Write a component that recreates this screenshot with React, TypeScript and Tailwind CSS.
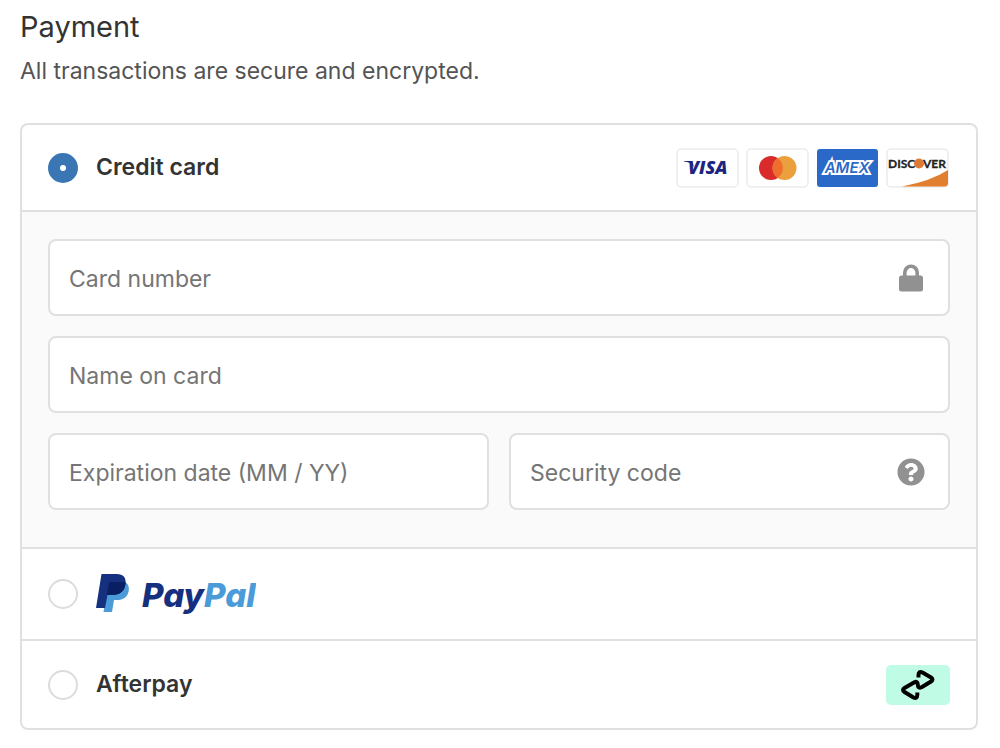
"use client";

import React, { useState } from 'react';
import { FaQuestionCircle } from 'react-icons/fa';

const radioClass =
  "appearance-none shrink-0 size-[30px] rounded-full bg-white border-2 border-[#dcdcdc] checked:border-[12px] checked:border-[#3a76b4] cursor-pointer";

const fieldClass =
  "flex items-center h-[77px] bg-white border-2 border-[#e0e0e0] rounded-lg pl-[19px] pr-[23px]";

const inputClass =
  "flex-1 min-w-0 h-full pt-0.5 bg-transparent text-[23px] text-[#333333] placeholder:text-[#757575] outline-none";

function VisaIcon() {
  return (
    <svg viewBox="0 0 63 40" className="w-[63px] h-10" role="img" aria-label="Visa">
      <rect x="1" y="1" width="61" height="38" rx="4" fill="#fff" stroke="#ebebeb" strokeWidth="1.5" />
      <path d="M8 13h8l2 6-3-3.200q-2.500-1.900-7-2.200z" fill="#1c2580" />
      <text x="12" y="26" fontFamily="Open Sans, sans-serif" fontSize="18" fontWeight="800" fontStyle="italic" fill="#1c2580">VISA</text>
    </svg>
  );
}

function MastercardIcon() {
  return (
    <svg viewBox="0 0 63 40" className="w-[63px] h-10" role="img" aria-label="Mastercard">
      <rect x="1" y="1" width="61" height="38" rx="4" fill="#fff" stroke="#ebebeb" strokeWidth="1.5" />
      <circle cx="25" cy="20" r="12" fill="#d92b2b" />
      <circle cx="38.500" cy="20" r="12" fill="#eba03d" />
      <path d="M31.750 10.100a12 12 0 0 1 0 19.800a12 12 0 0 1 0-19.800z" fill="#ee6f2d" />
    </svg>
  );
}

function AmexIcon() {
  return (
    <svg viewBox="0 0 63 40" className="w-[63px] h-10" role="img" aria-label="American Express">
      <rect x="1" y="1" width="61" height="38" rx="3" fill="#2a69c8" />
      <text
        x="31"
        y="25"
        textAnchor="middle"
        fontFamily="Inter, sans-serif"
        fontSize="15"
        fontWeight="600"
        fontStyle="italic"
        fill="#2a69c8"
        stroke="#fff"
        strokeWidth="4"
        paintOrder="stroke"
      >
        AMEX
      </text>
    </svg>
  );
}

function DiscoverIcon() {
  return (
    <svg viewBox="0 0 63 40" className="w-[63px] h-10" role="img" aria-label="Discover">
      <rect x="1" y="1" width="61" height="38" rx="4" fill="#fff" stroke="#ebebeb" strokeWidth="1.5" />
      <path d="M62 22v13q0 3.500-3.500 3.500H16Q45 33 62 22z" fill="#e27f2f" />
      <g fontFamily="Lato, sans-serif" fontSize="12" fontWeight="700" fill="#222" stroke="#222" strokeWidth="0.3">
        <text x="2" y="20">DISC</text>
        <text x="37" y="20">VER</text>
      </g>
      <circle cx="33" cy="15.500" r="5" fill="#df7a36" />
    </svg>
  );
}

function PaypalLogo() {
  return (
    <svg viewBox="0 0 160 44" className="w-40 h-11" role="img" aria-label="PayPal">
      <path d="M13 10h15c4 1 5.500 4.500 4.700 9c-1.200 6.500-6 9-11.500 9H18l-2 12H7.500z" fill="#4a9bd8" />
      <path d="M5.500 2H21c6 0 9.500 3.500 8.500 10c-1 7.500-6 11-13 11h-5L9 36H0z" fill="#15307e" />
      <path d="M13 10h16.500v2c-1 7.500-6 11-13 11h-5.700z" fill="#0a1f63" />
      <text x="46" y="35" fontFamily="Inter, sans-serif" fontSize="33" fontWeight="800" fontStyle="italic" fill="#15307e">
        Pay<tspan fill="#4a9bd8">Pal</tspan>
      </text>
    </svg>
  );
}

function AfterpayIcon() {
  return (
    <svg viewBox="0 0 64 40" className="w-16 h-10" role="img" aria-label="Afterpay">
      <rect width="64" height="40" rx="5" fill="#bffbe5" />
      <path
        d="M32.500 12.500V10Q32.500 5.500 36.500 7.500L45 12.500Q48 14.500 45 16.500L36 22Q32 24 31.800 20V19.500Q31.500 15.500 28 17.500L18.500 23Q15.500 25 18.500 27L27.500 32.500Q31.200 34 31.300 30V27.500"
        fill="none"
        stroke="#000"
        strokeWidth="4"
        strokeLinejoin="round"
      />
    </svg>
  );
}

function LockIcon() {
  return (
    <svg viewBox="0 0 28 28" className="size-7 shrink-0" aria-hidden="true">
      <rect x="2" y="11.500" width="24" height="16" rx="2.500" fill="#919191" />
      <path d="M7.800 13V8.500a6.200 6.200 0 0 1 12.400 0V13" fill="none" stroke="#919191" strokeWidth="3.600" />
    </svg>
  );
}

export default function App() {
  const [method, setMethod] = useState('card');

  const handleMethod = (e: React.ChangeEvent<HTMLInputElement>) => {
    setMethod(e.target.value);
  };

  return (
    <main className="min-h-screen bg-white pl-5 pr-[22px] pt-2 pb-[18px] font-['Inter',sans-serif] text-[#333333]">
      <h1 className="text-[29px] leading-[38px]">Payment</h1>
      <p className="mt-[9px] text-[23px] leading-8 text-[#545454]">
        All transactions are secure and encrypted.
      </p>

      <form className="mt-9 border-2 border-[#e0e0e0] rounded-lg divide-y-2 divide-[#e0e0e0] overflow-hidden">
        <div className="flex items-center h-[87px] px-[26px]">
          <label className="flex flex-1 items-center gap-[18px] text-[23px] font-semibold cursor-pointer">
            <input type="radio" name="method" value="card" checked={method === 'card'} onChange={handleMethod} className={radioClass} />
            Credit card
          </label>
          <div className="flex gap-[7px] mr-px">
            <VisaIcon />
            <MastercardIcon />
            <AmexIcon />
            <DiscoverIcon />
          </div>
        </div>

        {/* Card details */}
        <div className="grid grid-cols-2 gap-5 bg-[#fafafa] px-[26px] pt-[27px] pb-[37px]">
          <div className={`${fieldClass} col-span-2`}>
            <input type="text" aria-label="Card number" placeholder="Card number" className={inputClass} />
            <LockIcon />
          </div>
          <div className={`${fieldClass} col-span-2`}>
            <input type="text" aria-label="Name on card" placeholder="Name on card" className={inputClass} />
          </div>
          <div className={fieldClass}>
            <input type="text" aria-label="Expiration date" placeholder="Expiration date (MM / YY)" className={inputClass} />
          </div>
          <div className={fieldClass}>
            <input type="text" aria-label="Security code" placeholder="Security code" className={inputClass} />
            <FaQuestionCircle className="size-7 shrink-0 text-[#919191]" />
          </div>
        </div>

        <label className="flex items-center gap-[18px] h-[92px] px-[26px] cursor-pointer">
          <input type="radio" name="method" value="paypal" checked={method === 'paypal'} onChange={handleMethod} className={radioClass} />
          <PaypalLogo />
        </label>

        <div className="flex items-center h-[87px] px-[26px]">
          <label className="flex flex-1 items-center gap-[18px] text-[23px] font-semibold cursor-pointer">
            <input type="radio" name="method" value="afterpay" checked={method === 'afterpay'} onChange={handleMethod} className={radioClass} />
            Afterpay
          </label>
          <AfterpayIcon />
        </div>
      </form>
    </main>
  );
}
